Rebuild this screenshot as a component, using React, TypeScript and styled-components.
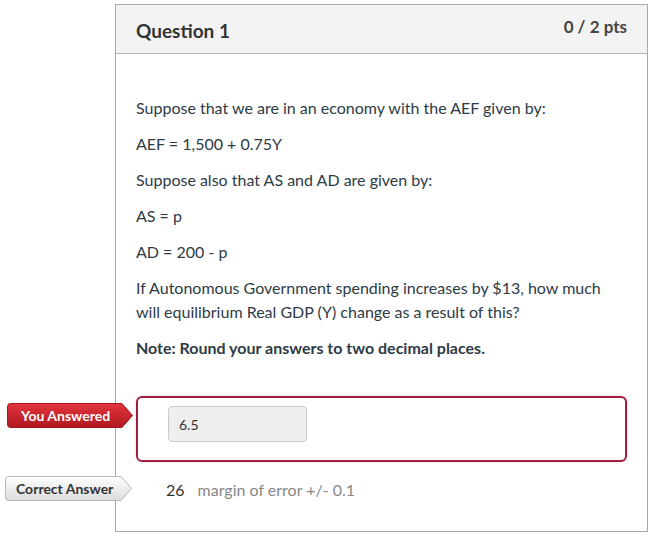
import React from 'react'
import styled, { createGlobalStyle } from 'styled-components'

const GlobalStyle = createGlobalStyle`
  body {
    margin: 0;
    background: #ffffff;
    font-family: Lato, "Open Sans", "Liberation Sans", sans-serif;
    color: #2d3b45;
  }
`

const Page = styled.div`
  padding: 4px 0 0 115px;
`

const Card = styled.div`
  width: 531px;
  height: 526px;
  border: 1px solid #a8a8a8;
  background: #fff;
`

const Header = styled.div`
  height: 48px;
  background: #f3f3f3;
  border-bottom: 1px solid #b4b4b4;
  display: flex;
  justify-content: space-between;
  align-items: flex-start;
  padding: 0 20px;
`

const Title = styled.h2`
  margin: 0;
  padding-top: 14px;
  font-size: 19px;
  font-weight: 700;
  color: #333;
  line-height: 24px;
`

const Points = styled.div`
  padding-top: 10px;
  font-size: 17px;
  font-weight: 700;
  color: #444;
  line-height: 24px;
`

const Body = styled.div`
  padding: 42px 20px 0;
`

const Para = styled.p<{ bold?: boolean }>`
  margin: 0 0 12px;
  font-size: 16px;
  line-height: 24px;
  color: #2d3b45;
  font-weight: ${p => (p.bold ? 700 : 400)};
`

const Answers = styled.div`
  margin-top: 36px;
`

const AnswerBox = styled.div`
  position: relative;
  height: 54px;
  border: 2px solid #9c1f3c;
  border-radius: 6px;
  box-shadow: 0 0 2px rgba(220, 120, 150, 0.5);
  padding: 8px 30px 0;
  box-sizing: content-box;
  width: 427px;
`

const InputField = styled.div`
  width: 127px;
  height: 34px;
  background: #efefef;
  border: 1px solid #c9c9c9;
  border-radius: 4px;
  padding-left: 10px;
  display: flex;
  align-items: center;
  font-size: 14px;
  color: #333;
`

const CorrectRow = styled.div`
  position: relative;
  margin-top: 14px;
  height: 26px;
  padding-left: 30px;
  display: flex;
  align-items: center;
  font-size: 16px;
`

const CorrectValue = styled.span`
  color: #333;
  margin-right: 13px;
`

const Margin = styled.span`
  color: #888;
`

const Tag = styled.div<{ left: number; top: number; w: number; h: number; dark?: boolean }>`
  position: absolute;
  left: ${p => p.left}px;
  top: ${p => p.top}px;
  width: ${p => p.w}px;
  height: ${p => p.h}px;
  display: flex;
  align-items: center;
  font-size: 14px;
  font-weight: 700;
  color: ${p => (p.dark ? '#ffffff' : '#333333')};

  svg {
    position: absolute;
    inset: 0;
  }
`

const TagText = styled.span<{ pad: number }>`
  position: relative;
  padding-left: ${p => p.pad}px;
`

function TagShape({ w, h, id, from, to, stroke }: { w: number; h: number; id: string; from: string; to: string; stroke: string }) {
  const tip = 11
  const d = `M3.5 0.5 H${w - tip} L${w - 0.5} ${h / 2} L${w - tip} ${h - 0.5} H3.5 Q0.5 ${h - 0.5} 0.5 ${h - 3.5} V3.5 Q0.5 0.5 3.5 0.5 Z`
  return (
    <svg width={w} height={h} viewBox={`0 0 ${w} ${h}`}>
      <defs>
        <linearGradient id={id} x1="0" y1="0" x2="0" y2="1">
          <stop offset="0" stopColor={from} />
          <stop offset="1" stopColor={to} />
        </linearGradient>
      </defs>
      <path d={d} fill={`url(#${id})`} stroke={stroke} strokeWidth="1" />
    </svg>
  )
}

export default function App() {
  return (
    <>
      <GlobalStyle />
      <Page>
        <Card>
          <Header>
            <Title>Question 1</Title>
            <Points>0 / 2 pts</Points>
          </Header>
          <Body>
            <Para>Suppose that we are in an economy with the AEF given by:</Para>
            <Para>AEF = 1,500 + 0.75Y</Para>
            <Para>Suppose also that AS and AD are given by:</Para>
            <Para>AS = p</Para>
            <Para>AD = 200 - p</Para>
            <Para>
              If Autonomous Government spending increases by $13, how much will equilibrium Real GDP (Y) change as a
              result of this?
            </Para>
            <Para bold>Note: Round your answers to two decimal places.</Para>
            <Answers>
              <AnswerBox>
                <Tag left={-131} top={5} w={126} h={25} dark>
                  <TagShape w={126} h={25} id="red" from="#e2353d" to="#b01820" stroke="#a8161d" />
                  <TagText pad={14}>You Answered</TagText>
                </Tag>
                <InputField>6.5</InputField>
              </AnswerBox>
              <CorrectRow>
                <Tag left={-131} top={0} w={127} h={25}>
                  <TagShape w={127} h={25} id="gray" from="#ffffff" to="#dcdcdc" stroke="#b8b8b8" />
                  <TagText pad={11}>Correct Answer</TagText>
                </Tag>
                <CorrectValue>26</CorrectValue>
                <Margin>margin of error +/- 0.1</Margin>
              </CorrectRow>
            </Answers>
          </Body>
        </Card>
      </Page>
    </>
  )
}
